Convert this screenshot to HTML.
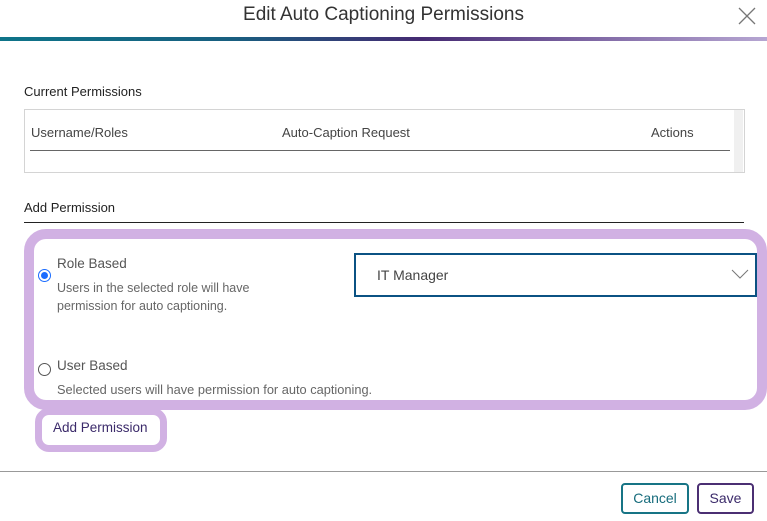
<!DOCTYPE html>
<html><head><style>
body{margin:0;width:767px;height:521px;background:#fff;font-family:"Liberation Sans",sans-serif;position:relative;overflow:hidden;color:#222}
.a{position:absolute;white-space:nowrap}
</style></head><body>
<div class="a" style="left:0;width:767px;top:4px;text-align:center;font-size:19px;color:#333;">Edit Auto Captioning Permissions</div>
<svg class="a" style="left:737px;top:6px" width="20" height="20"><path d="M2 2L18 18M18 2L2 18" stroke="#777" stroke-width="1.3"/></svg>
<div class="a" style="left:0;top:37px;width:767px;height:4px;background:linear-gradient(90deg,#0e7489 0%,#185f80 30%,#452a72 55%,#7a62a0 75%,#b6a6d2 100%)"></div>
<div class="a" style="left:24px;top:84px;font-size:13px;color:#222">Current Permissions</div>
<div class="a" style="left:24px;top:109px;width:719px;height:62px;border:1px solid #d4d4d4"></div>
<div class="a" style="left:734px;top:110px;width:9px;height:62px;background:#f0f0f0"></div>
<div class="a" style="left:31px;top:125px;font-size:13px;color:#444">Username/Roles</div>
<div class="a" style="left:282px;top:125px;font-size:13px;color:#444">Auto-Caption Request</div>
<div class="a" style="left:651px;top:125px;font-size:13px;color:#444">Actions</div>
<div class="a" style="left:30px;top:150px;width:700px;height:1px;background:#666"></div>
<div class="a" style="left:24px;top:200px;font-size:13px;color:#222">Add Permission</div>
<div class="a" style="left:24px;top:222px;width:720px;height:1px;background:#222"></div>
<div class="a" style="left:24px;top:229px;width:743px;height:181px;box-sizing:border-box;border:10px solid #d1b1e3;border-radius:22px;background:#fff"></div>
<div class="a" style="left:38px;top:269px;width:13px;height:13px;border-radius:50%;border:1px solid #1a6cff;box-sizing:border-box;background:#fff"><div style="margin:2px;width:7px;height:7px;border-radius:50%;background:#1a6cff"></div></div>
<div class="a" style="left:57px;top:256px;font-size:13.5px;color:#555">Role Based</div>
<div class="a" style="left:57px;top:281px;font-size:12.5px;color:#666">Users in the selected role will have</div>
<div class="a" style="left:57px;top:299px;font-size:12.5px;color:#666">permission for auto captioning.</div>
<div class="a" style="left:354px;top:253px;width:403px;height:44px;box-sizing:border-box;border:2px solid #0b5283"></div>
<div class="a" style="left:377px;top:267px;font-size:14px;color:#444">IT Manager</div>
<svg class="a" style="left:731px;top:268px" width="18" height="12"><path d="M1 2L9 10L17 2" stroke="#777" fill="none" stroke-width="1"/></svg>
<div class="a" style="left:38px;top:363px;width:13px;height:13px;border-radius:50%;border:1px solid #555;box-sizing:border-box;background:#fff"></div>
<div class="a" style="left:57px;top:358px;font-size:13.5px;color:#555">User Based</div>
<div class="a" style="left:57px;top:382px;font-size:12.8px;color:#666">Selected users will have permission for auto captioning.</div>
<div class="a" style="left:35px;top:408px;width:132px;height:44px;box-sizing:border-box;border:7px solid #d1b1e3;border-radius:14px;background:#fff"></div>
<div class="a" style="left:53px;top:420px;font-size:13.5px;color:#3b2a6a">Add Permission</div>
<div class="a" style="left:0;top:471px;width:767px;height:1px;background:#999"></div>
<div class="a" style="left:621px;top:483px;width:68px;height:31px;box-sizing:border-box;border:2px solid #177485;border-radius:4px;text-align:center;line-height:27px;font-size:14px;color:#176c7c">Cancel</div>
<div class="a" style="left:697px;top:483px;width:57px;height:31px;box-sizing:border-box;border:2px solid #4b2f73;border-radius:4px;text-align:center;line-height:27px;font-size:14px;color:#3b2a6a">Save</div>
</body></html>
